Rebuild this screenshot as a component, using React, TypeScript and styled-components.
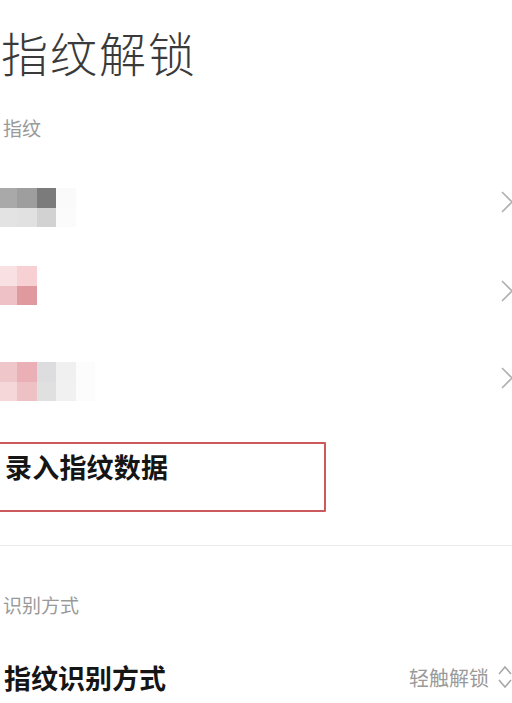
import React from "react";
import styled, { createGlobalStyle } from "styled-components";

const Global = createGlobalStyle`
  html, body { margin: 0; padding: 0; background: #ffffff; }
  body { font-family: "Noto Sans CJK SC", "Noto Sans", sans-serif; overflow: hidden; }
`;

const Page = styled.div`
  width: 512px;
  height: 703px;
  overflow: hidden;
  background: #ffffff;
  display: flex;
  flex-direction: column;
`;

const Title = styled.h1`
  margin: 0;
  padding: 23px 0 0 1px;
  height: 58px;
  font-size: 47px;
  line-height: 58px;
  font-weight: 300;
  letter-spacing: 2px;
  color: #3a3a3a;
`;

const SectionLabel = styled.div<{ $top: number; $bottom: number }>`
  margin-top: ${(p) => p.$top}px;
  margin-bottom: ${(p) => p.$bottom}px;
  padding-left: 3px;
  font-size: 19px;
  line-height: 26px;
  color: #9a9a9a;
`;

const FingerList = styled.div`
  display: flex;
  flex-direction: column;
`;

const FingerRow = styled.div<{ $h: number }>`
  height: ${(p) => p.$h}px;
  display: flex;
  align-items: flex-start;
  justify-content: space-between;
`;

const Mosaic = styled.div<{ $top: number; $cols: number }>`
  margin-top: ${(p) => p.$top}px;
  margin-left: -2.5px;
  display: grid;
  grid-template-columns: repeat(${(p) => p.$cols}, 19.5px);
  grid-auto-rows: 19.5px;
`;

const Cell = styled.div<{ $c: string }>`
  background: ${(p) => p.$c};
`;

const Chevron = styled.svg<{ $top: number }>`
  margin-top: ${(p) => p.$top}px;
  margin-right: -2px;
  width: 14px;
  height: 22px;
  flex: none;
`;

const AddBox = styled.div`
  margin-left: -2px;
  width: 328px;
  height: 70px;
  box-sizing: border-box;
  border: 2px solid #cc5a5c;
  border-radius: 1px;
  display: flex;
  align-items: center;
  padding-left: 5px;
  padding-bottom: 21px;
`;

const AddText = styled.span`
  font-size: 27px;
  font-weight: 700;
  color: #151515;
  letter-spacing: 0.2px;
`;

const Divider = styled.div`
  margin-top: 33px;
  height: 1px;
  background: #ebebeb;
`;

const SettingRow = styled.div`
  display: flex;
  align-items: center;
  justify-content: space-between;
  height: 40px;
`;

const SettingName = styled.span`
  padding-left: 4px;
  font-size: 27px;
  font-weight: 700;
  color: #151515;
`;

const SettingValue = styled.div`
  display: flex;
  align-items: center;
  gap: 8px;
  font-size: 20px;
  color: #9a9a9a;
`;

const UpDown = styled.svg`
  width: 16px;
  height: 26px;
  margin-right: -1px;
`;

type Finger = { top: number; h: number; chev: number; cols: number; cells: string[] };

const fingers: Finger[] = [
  {
    top: 47,
    h: 100,
    chev: 50,
    cols: 4,
    cells: ["#a9a9a9", "#9e9e9e", "#7b7b7b", "#fafafa", "#e3e3e3", "#e1e1e1", "#d2d2d2", "#fbfbfb"],
  },
  {
    top: 25,
    h: 96,
    chev: 39,
    cols: 2,
    cells: ["#f9e1e3", "#f7d0d3", "#edc1c5", "#e0999e"],
  },
  {
    top: 25,
    h: 105,
    chev: 30,
    cols: 5,
    cells: [
      "#efc6ca", "#ebb0b5", "#dddddf", "#f0f0f0", "#fcfcfc",
      "#f5d7da", "#eec1c5", "#e0e0e1", "#f1f1f1", "#fcfcfc",
    ],
  },
];

export default function App() {
  return (
    <Page>
      <Global />
      <Title>指纹解锁</Title>
      <SectionLabel $top={34} $bottom={0}>指纹</SectionLabel>
      <FingerList>
        {fingers.map((f, i) => (
          <FingerRow key={i} $h={f.h}>
            <Mosaic $top={f.top} $cols={f.cols}>
              {f.cells.map((c, j) => (
                <Cell key={j} $c={c} />
              ))}
            </Mosaic>
            <Chevron $top={f.chev} viewBox="0 0 14 22">
              <path d="M2 1 L12 11 L2 21" fill="none" stroke="#b0b0b0" strokeWidth="1.6" />
            </Chevron>
          </FingerRow>
        ))}
      </FingerList>
      <AddBox>
        <AddText>录入指纹数据</AddText>
      </AddBox>
      <Divider />
      <SectionLabel $top={46} $bottom={39}>识别方式</SectionLabel>
      <SettingRow>
        <SettingName>指纹识别方式</SettingName>
        <SettingValue>
          轻触解锁
          <UpDown viewBox="0 0 16 26">
            <path d="M2 10 L8 3 L14 10" fill="none" stroke="#a8a8a8" strokeWidth="1.6" />
            <path d="M2 16 L8 23 L14 16" fill="none" stroke="#a8a8a8" strokeWidth="1.6" />
          </UpDown>
        </SettingValue>
      </SettingRow>
    </Page>
  );
}
